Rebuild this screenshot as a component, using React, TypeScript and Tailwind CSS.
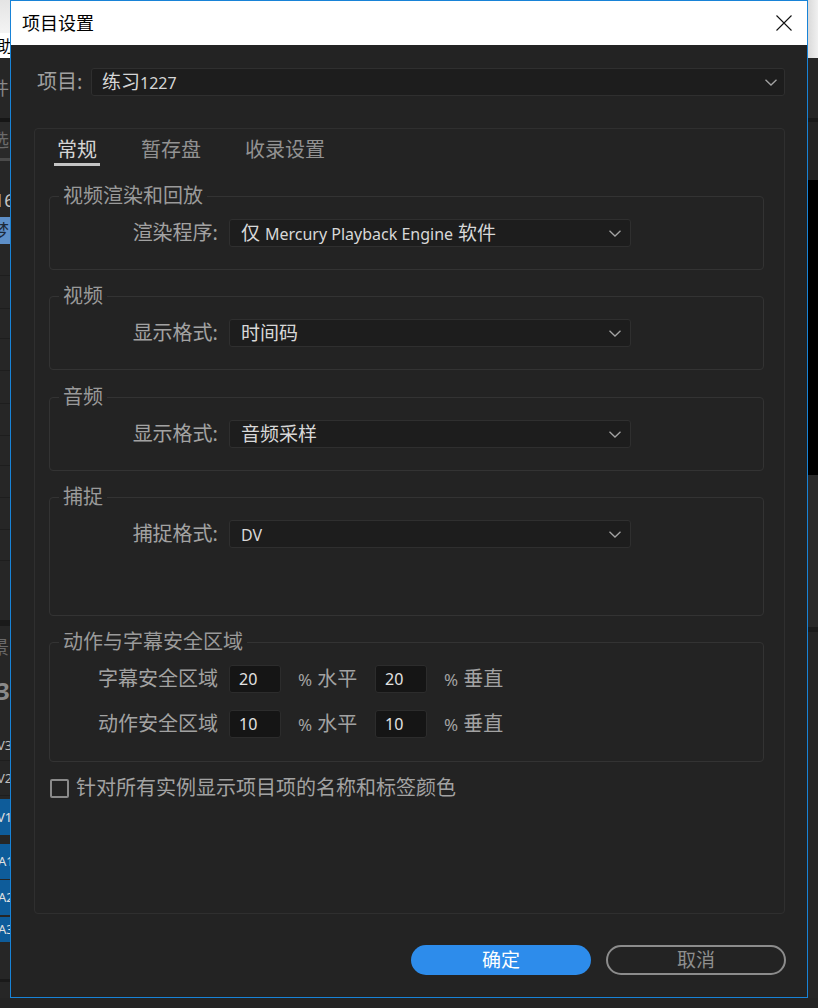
import React from "react";

const Chevron = () => (
  <svg width="12" height="7" viewBox="0 0 12 7" className="shrink-0">
    <path d="M0.5 0.8 L6 6 L11.5 0.8" fill="none" stroke="#a3a3a3" strokeWidth="1.3" />
  </svg>
);

const L = ({ children }: { children: React.ReactNode }) => <span className="text-[16px]">{children}</span>;

function Select({ children }: { children: React.ReactNode }) {
  return (
    <div className="flex h-[28px] w-[402px] items-center justify-between rounded-[3px] border border-[#2f2f2f] bg-[#1d1d1d] pl-[11px] pr-[9px] text-[19px] leading-none text-[#d8d8d8]">
      <span className="whitespace-nowrap">{children}</span>
      <Chevron />
    </div>
  );
}

function Group({
  title,
  children,
  className = "",
}: {
  title: string;
  children: React.ReactNode;
  className?: string;
}) {
  return (
    <fieldset className={`ml-[14px] w-[715px] rounded-[4px] border border-[#333333] ${className}`}>
      <legend className="ml-[9px] px-[4px] text-[20px] leading-[26px] text-[#9a9a9a]">{title}</legend>
      {children}
    </fieldset>
  );
}

function Row({ label, children }: { label: string; children: React.ReactNode }) {
  return (
    <div className="flex items-center">
      <div className="w-[168px] whitespace-nowrap text-right text-[20px] leading-none text-[#a2a2a2]">{label}</div>
      <div className="ml-[11px]">{children}</div>
    </div>
  );
}

function NumInput({ value }: { value: string }) {
  return (
    <div className="flex h-[28px] w-[52px] items-center rounded-[3px] border border-[#2c2c2c] bg-[#151515] pl-[9px] text-[16px] leading-none text-[#e2e2e2]">
      {value}
    </div>
  );
}

function SafeRow({ label, a, b }: { label: string; a: string; b: string }) {
  return (
    <div className="flex items-center">
      <div className="w-[168px] whitespace-nowrap text-right text-[20px] leading-none text-[#a2a2a2]">{label}</div>
      <div className="ml-[11px] flex items-center">
        <NumInput value={a} />
        <span className="ml-[17px] w-[77px] whitespace-nowrap text-[20px] leading-none text-[#a2a2a2]">
          <span className="text-[17px]">%</span> 水平
        </span>
        <NumInput value={b} />
        <span className="ml-[17px] whitespace-nowrap text-[20px] leading-none text-[#a2a2a2]">
          <span className="text-[17px]">%</span> 垂直
        </span>
      </div>
    </div>
  );
}

function Line({ h, children, className = "" }: { h: string; children?: React.ReactNode; className?: string }) {
  return <div className={`flex items-center ${h} ${className}`}>{children}</div>;
}

function LeftStrip() {
  return (
    <div className="flex h-[998px] w-[10px] flex-col overflow-hidden bg-[#262626] text-[16px] leading-none">
      <Line h="h-[33px]" className="bg-gradient-to-b from-[#e4e4e4] to-[#f4f4f4]" />
      <Line h="h-[25px]" className="bg-white">
        <span className="-ml-[3px] text-black">助</span>
      </Line>
      <Line h="h-[60px]" className="bg-[#262626]">
        <span className="-ml-[9px] text-[18px] text-[#8a8a8a]">件</span>
      </Line>
      <Line h="h-[4px]" className="bg-[#161616]" />
      <Line h="h-[36px]" className="bg-[#2a2a2a]">
        <span className="-ml-[9px] text-[18px] text-[#6a6a6a]">选</span>
      </Line>
      <Line h="h-[3px]" className="bg-[#4a4a4a]" />
      <Line h="h-[26px]" className="bg-[#262626]" />
      <Line h="h-[25px]" className="bg-[#262626]">
        <span className="-ml-[6px] text-[18px] text-[#c4c4c4]">16</span>
      </Line>
      <Line h="h-[5px]" className="bg-[#262626]" />
      <Line h="h-[27px]" className="bg-[#5d8fc8]">
        <span className="-ml-[9px] text-[18px] text-[#1d2a3a]">梦</span>
      </Line>
      <Line h="h-[32px]" className="border-b border-[#1e1e1e]" />
      <Line h="h-[33px]" className="border-b border-[#1e1e1e]" />
      <Line h="h-[30px]" className="border-b border-[#1e1e1e]" />
      <Line h="h-[32px]" className="border-b border-[#1e1e1e]" />
      <Line h="h-[33px]" className="border-b border-[#1e1e1e]" />
      <Line h="h-[32px]" className="border-b border-[#1e1e1e]" />
      <Line h="h-[30px]" className="border-b border-[#1e1e1e]" />
      <Line h="h-[32px]" className="border-b border-[#1e1e1e]" />
      <Line h="h-[32px]" className="border-b border-[#1e1e1e]" />
      <Line h="h-[31px]" className="border-b border-[#1e1e1e]" />
      <Line h="h-[59px]" />
      <Line h="h-[6px]" className="bg-[#1a1a1a]" />
      <Line h="h-[41px]">
        <span className="-ml-[9px] text-[18px] text-[#6a6a6a]">景</span>
      </Line>
      <Line h="h-[47px]">
        <span className="-ml-[4px] text-[24px] font-bold text-[#8a8a8a]">3</span>
      </Line>
      <Line h="h-[17px]" />
      <Line h="h-[30px]" className="border-b border-[#1e1e1e]">
        <span className="-ml-[3px] text-[13px] text-[#bdbdbd]">V3</span>
      </Line>
      <Line h="h-[35px]" className="border-b border-[#1e1e1e]">
        <span className="-ml-[3px] text-[13px] text-[#bdbdbd]">V2</span>
      </Line>
      <Line h="h-[3px]" />
      <Line h="h-[36px]" className="bg-[#0e5c9a]">
        <span className="-ml-[3px] text-[13px] text-[#e0e0e0]">V1</span>
      </Line>
      <Line h="h-[9px]" />
      <Line h="h-[35px]" className="bg-[#0e5c9a]">
        <span className="-ml-[2px] text-[13px] text-[#e0e0e0]">A1</span>
      </Line>
      <Line h="h-[1px]" />
      <Line h="h-[35px]" className="bg-[#0e5c9a]">
        <span className="-ml-[2px] text-[13px] text-[#e0e0e0]">A2</span>
      </Line>
      <Line h="h-[2px]" />
      <Line h="h-[25px]" className="bg-[#0e5c9a]">
        <span className="-ml-[2px] text-[13px] text-[#e0e0e0]">A3</span>
      </Line>
      <Line h="h-[37px]" />
      <Line h="h-[3px]" className="bg-[#1a1a1a]" />
      <div className="flex-1 bg-[#262626]" />
    </div>
  );
}

function RightStrip() {
  return (
    <div className="flex h-[998px] w-[10px] flex-col overflow-hidden">
      <div className="h-[58px] bg-gradient-to-r from-[#dadada] to-[#f0f0f0]" />
      <div className="h-[60px] bg-[#262626]" />
      <div className="h-[4px] bg-[#1a1a1a]" />
      <div className="h-[58px] bg-[#242424]" />
      <div className="h-[295px] bg-black" />
      <div className="h-[152px] bg-[#2a2a2a]" />
      <div className="h-[5px] bg-[#1c1c1c]" />
      <div className="flex-1 bg-[#262626]" />
    </div>
  );
}

export default function App() {
  return (
    <div className="flex h-[1008px] w-[818px] flex-col overflow-hidden bg-[#252525] [font-family:'Noto_Sans','Noto_Sans_CJK_SC',sans-serif]">
      <div className="flex h-[998px]">
        <LeftStrip />
        <div className="flex h-[998px] w-[798px] flex-col border border-[#1883d7] bg-[#232323]">
          {/* title bar */}
          <div className="flex h-[44px] items-center justify-between bg-white pl-[11px] pr-[15px]">
            <span className="text-[18px] leading-none text-black">项目设置</span>
            <svg width="16" height="16" viewBox="0 0 16 16">
              <path d="M0.5 0.5 L15.5 15.5 M15.5 0.5 L0.5 15.5" stroke="#111" strokeWidth="1.1" />
            </svg>
          </div>

          {/* body */}
          <div className="flex flex-1 flex-col pl-[23px] pr-[22px] pt-[23px]">
            {/* project row */}
            <div className="flex h-[28px] items-center">
              <div className="w-[57px] pl-[3px] text-[20px] leading-none text-[#a0a0a0]">项目:</div>
              <div className="flex h-[28px] flex-1 items-center justify-between rounded-[3px] border border-[#2f2f2f] bg-[#1d1d1d] pl-[10px] pr-[7px] leading-none text-[#d6d6d6]">
                <span className="whitespace-nowrap text-[19px]">
                  练习<span className="text-[16px]">1227</span>
                </span>
                <Chevron />
              </div>
            </div>

            {/* panel */}
            <div className="mt-[32px] flex h-[786px] flex-col rounded-[4px] border border-[#2f2f2f]">
              {/* tabs */}
              <div className="flex gap-[38px] pl-[19px] pt-[8px]">
                <span className="border-b-[3px] border-[#c4c4c4] px-[3px] text-[20px] leading-[26px] text-[#d4d4d4]">常规</span>
                <span className="border-b-[3px] border-transparent px-[3px] text-[20px] leading-[26px] text-[#929292]">暂存盘</span>
                <span className="border-b-[3px] border-transparent px-[3px] text-[20px] leading-[26px] text-[#929292]">收录设置</span>
              </div>

              <Group title="视频渲染和回放" className="mt-[17px] pb-[22px] pt-[10px]">
                <Row label="渲染程序:">
                  <Select>
                    仅 <L>Mercury Playback Engine</L> 软件
                  </Select>
                </Row>
              </Group>

              <Group title="视频" className="mt-[13px] pb-[22px] pt-[10px]">
                <Row label="显示格式:">
                  <Select>时间码</Select>
                </Row>
              </Group>

              <Group title="音频" className="mt-[14px] pb-[22px] pt-[10px]">
                <Row label="显示格式:">
                  <Select>音频采样</Select>
                </Row>
              </Group>

              <Group title="捕捉" className="mt-[13px] pb-[67px] pt-[10px]">
                <Row label="捕捉格式:">
                  <Select>
                    <L>DV</L>
                  </Select>
                </Row>
              </Group>

              <Group title="动作与字幕安全区域" className="mt-[13px] pb-[23px] pt-[10px]">
                <div className="flex flex-col gap-[17px]">
                  <SafeRow label="字幕安全区域" a="20" b="20" />
                  <SafeRow label="动作安全区域" a="10" b="10" />
                </div>
              </Group>

              <div className="ml-[15px] mt-[16px] flex items-center">
                <div className="h-[19px] w-[19px] rounded-[2px] border-2 border-[#8a8a8a]" />
                <span className="ml-[7px] whitespace-nowrap text-[20px] leading-none text-[#a2a2a2]">
                  针对所有实例显示项目项的名称和标签颜色
                </span>
              </div>
            </div>

            {/* buttons */}
            <div className="-mr-[1px] mt-[31px] flex justify-end gap-[15px]">
              <div className="flex h-[30px] w-[180px] items-center justify-center rounded-full bg-[#2d8ceb] text-[19px] leading-none text-white">
                确定
              </div>
              <div className="flex h-[30px] w-[180px] items-center justify-center rounded-full border-2 border-[#8c8c8c] text-[19px] leading-none text-[#8e8e8e]">
                取消
              </div>
            </div>
          </div>
        </div>
        <RightStrip />
      </div>
      <div className="h-[10px] bg-[#242424]" />
    </div>
  );
}
